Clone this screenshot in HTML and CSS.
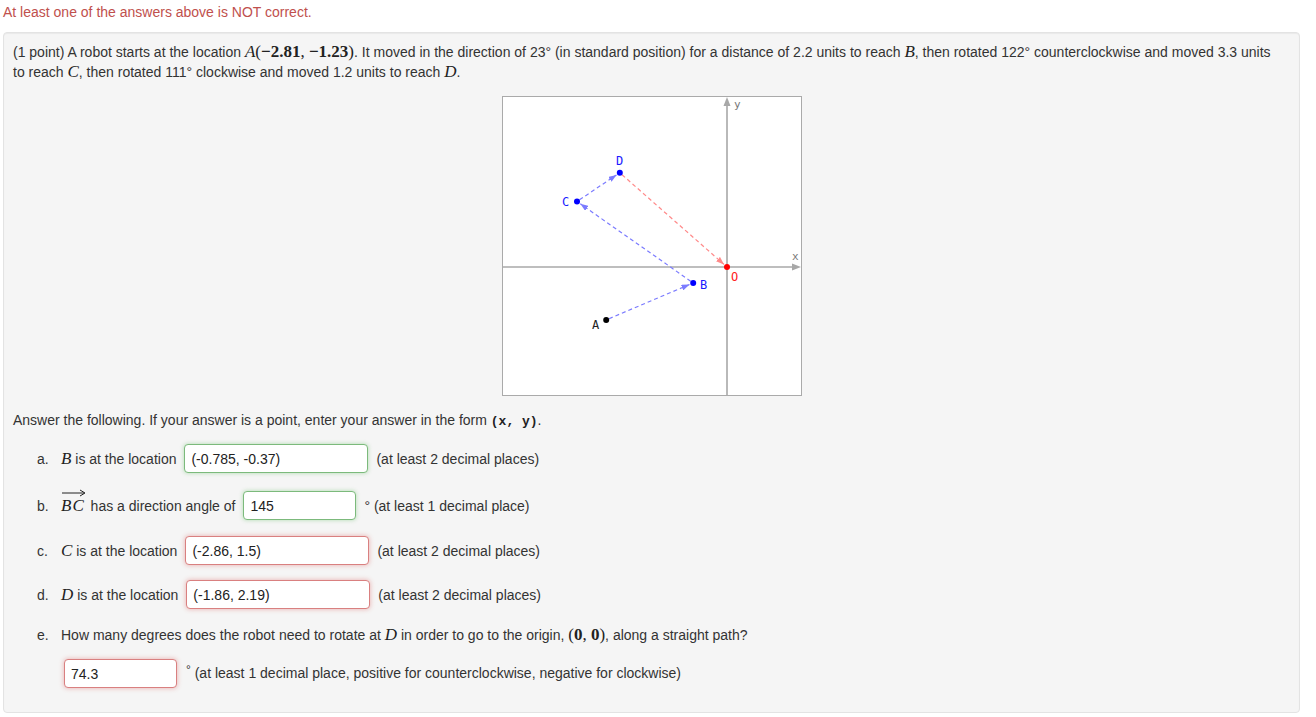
FILE: index.html
```html
<!DOCTYPE html>
<html>
<head>
<meta charset="utf-8">
<link rel="stylesheet" href="styles.css">
</head>
<body>
<div class="msg">At least one of the answers above is NOT correct.</div>
<div class="well">
  <p class="problem">(1 point) A robot starts at the location <span class="m"><i>A</i>(<b>−2.81</b>, <b>−1.23</b>)</span>. It moved in the direction of 23° (in standard position) for a distance of 2.2 units to reach <span class="m"><i>B</i></span>, then rotated 122° counterclockwise and moved 3.3 units<br>to reach <span class="m"><i>C</i></span>, then rotated 111° clockwise and moved 1.2 units to reach <span class="m"><i>D</i></span>.</p>

  <div class="graph">
    <svg width="298" height="298" viewBox="0 0 298 298">
      <defs>
        <marker id="ab" markerUnits="userSpaceOnUse" markerWidth="8" markerHeight="6" refX="8" refY="3" orient="auto">
          <path d="M0,0 L8,3 L0,6 z" fill="#7b7bff"/>
        </marker>
        <marker id="ar" markerUnits="userSpaceOnUse" markerWidth="8" markerHeight="6" refX="8" refY="3" orient="auto">
          <path d="M0,0 L8,3 L0,6 z" fill="#ff8a8a"/>
        </marker>
      </defs>
      <line x1="0" y1="170" x2="291" y2="170" stroke="#a8a8a8" stroke-width="1.6"/>
      <path d="M298,170 L289,166.5 L289,173.5 z" fill="#a8a8a8"/>
      <line x1="224" y1="298" x2="224" y2="7" stroke="#a8a8a8" stroke-width="1.6"/>
      <path d="M224,0 L220.5,9 L227.5,9 z" fill="#a8a8a8"/>
      <text x="289" y="163" class="ax">x</text>
      <text x="231" y="11" class="ax">y</text>

      <line x1="106" y1="221.7" x2="186.5" y2="187.5" stroke="#7b7bff" stroke-width="1.2" stroke-dasharray="4 3" marker-end="url(#ab)"/>
      <line x1="187.7" y1="184.2" x2="77.3" y2="106.8" stroke="#7b7bff" stroke-width="1.2" stroke-dasharray="4 3" marker-end="url(#ab)"/>
      <line x1="76.5" y1="102.8" x2="113.5" y2="77.9" stroke="#7b7bff" stroke-width="1.2" stroke-dasharray="4 3" marker-end="url(#ab)"/>
      <line x1="119" y1="77.7" x2="221" y2="167.4" stroke="#ff8a8a" stroke-width="1.2" stroke-dasharray="4 3" marker-end="url(#ar)"/>

      <circle cx="116.8" cy="75.7" r="3" fill="#0000ff"/>
      <circle cx="74" cy="104.5" r="3" fill="#0000ff"/>
      <circle cx="190.2" cy="185.9" r="3" fill="#0000ff"/>
      <circle cx="103.2" cy="222.9" r="3" fill="#000"/>
      <circle cx="224" cy="170" r="3" fill="#ff0000"/>

      <text x="113" y="68" class="lb blue">D</text>
      <text x="59" y="109" class="lb blue">C</text>
      <text x="197" y="192" class="lb blue">B</text>
      <text x="228" y="184" class="lb red">O</text>
      <text x="89" y="232" class="lb black">A</text>
    </svg>
  </div>

  <p class="intro">Answer the following. If your answer is a point, enter your answer in the form <span class="tt">(x, y)</span>.</p>

  <div class="row row-a">
    <span class="lbl">a.</span>
    <span><span class="m"><i>B</i></span> is at the location</span>
    <input class="ans ok wide" type="text" value="(-0.785, -0.37)">
    <span>(at least 2 decimal places)</span>
  </div>

  <div class="row row-b">
    <span class="lbl">b.</span>
    <span><span class="m vec"><i>BC</i><svg class="vecarrow" width="24" height="8" viewBox="0 0 24 8"><line x1="0" y1="4" x2="22" y2="4" stroke="#222" stroke-width="1"/><path d="M18,1 L23,4 L18,7" fill="none" stroke="#222" stroke-width="1"/></svg></span> has a direction angle of</span>
    <input class="ans ok narrow" type="text" value="145">
    <span>° (at least 1 decimal place)</span>
  </div>

  <div class="row row-c">
    <span class="lbl">c.</span>
    <span><span class="m"><i>C</i></span> is at the location</span>
    <input class="ans bad wide" type="text" value="(-2.86, 1.5)">
    <span>(at least 2 decimal places)</span>
  </div>

  <div class="row row-d">
    <span class="lbl">d.</span>
    <span><span class="m"><i>D</i></span> is at the location</span>
    <input class="ans bad wide" type="text" value="(-1.86, 2.19)">
    <span>(at least 2 decimal places)</span>
  </div>

  <div class="row row-e">
    <span class="lbl">e.</span>
    <span>How many degrees does the robot need to rotate at <span class="m"><i>D</i></span> in order to go to the origin, <span class="m">(<b>0</b>, <b>0</b>)</span>, along a straight path?</span>
  </div>

  <div class="row row-f">
    <input class="ans bad narrow first" type="text" value="74.3">
    <span><span class="deg">°</span> (at least 1 decimal place, positive for counterclockwise, negative for clockwise)</span>
  </div>
</div>
</body>
</html>
```

FILE: styles.css
```css
html, body {
  margin: 0;
  padding: 0;
  background: #ffffff;
}

body {
  font-family: "Liberation Sans", Arial, sans-serif;
  font-size: 14px;
  line-height: 20px;
  color: #333333;
}

.msg {
  color: #c0504d;
  margin: 2px 0 0 3px;
  line-height: 20px;
}

.well {
  box-sizing: border-box;
  width: 1297px;
  margin: 10px 0 0 3px;
  padding: 9px 9px 24px 9px;
  background: #f5f5f5;
  border: 1px solid #e3e3e3;
  border-radius: 4px;
  box-shadow: inset 0 1px 1px rgba(0, 0, 0, 0.05);
}

.problem {
  margin: 0;
  line-height: 20px;
}

.m {
  font-family: "Liberation Serif", "Times New Roman", serif;
  font-size: 17px;
  line-height: 14px;
  color: #222;
}

.m i {
  font-style: italic;
}

.m b {
  font-weight: bold;
}

.graph {
  width: 298px;
  height: 298px;
  margin: 14px auto 0 auto;
  border: 1px solid #aaaaaa;
  background: #ffffff;
}

.graph svg {
  display: block;
}

.ax {
  font-family: "DejaVu Sans Mono", monospace;
  font-size: 11px;
  fill: #777777;
}

.lb {
  font-family: "DejaVu Sans Mono", monospace;
  font-size: 12px;
}

.blue { fill: #1a1aff; }
.red { fill: #ff2020; }
.black { fill: #222222; }

.intro {
  margin: 14px 0 0 0;
  line-height: 20px;
}

.tt {
  font-family: "Liberation Mono", "Courier New", monospace;
  font-weight: bold;
  font-size: 13px;
  color: #222;
}

.row {
  display: flex;
  align-items: center;
  height: 29px;
  padding-left: 24px;
  white-space: nowrap;
}

.row-a { margin-top: 12px; }
.row-b { margin-top: 18px; }
.row-c { margin-top: 16px; }
.row-d { margin-top: 15px; }
.row-e { margin-top: 14px; height: 24px; }
.row-f { margin-top: 12px; padding-left: 51px; }

.lbl {
  display: inline-block;
  width: 24px;
}

.ans {
  box-sizing: border-box;
  height: 29px;
  margin: 0 8px 0 8px;
  padding: 0 6px;
  font-family: "Liberation Sans", Arial, sans-serif;
  font-size: 14px;
  color: #222;
  background: #ffffff;
  border-radius: 4px;
  outline: none;
}

.ans.first {
  margin-left: 0;
  margin-right: 9px;
}

.wide { width: 184px; }
.narrow { width: 113px; }

.ok {
  border: 1px solid #7cba7c;
  box-shadow: 0 0 4px rgba(92, 184, 92, 0.45);
}

.bad {
  border: 1px solid #d98080;
  box-shadow: 0 0 5px rgba(217, 83, 79, 0.45);
}

.vec {
  position: relative;
  display: inline-block;
  letter-spacing: 1px;
  padding-right: 2px;
}

.vecarrow {
  position: absolute;
  left: 1px;
  top: -10px;
}

.deg {
  position: relative;
  top: -4px;
  font-size: 12px;
}
```
